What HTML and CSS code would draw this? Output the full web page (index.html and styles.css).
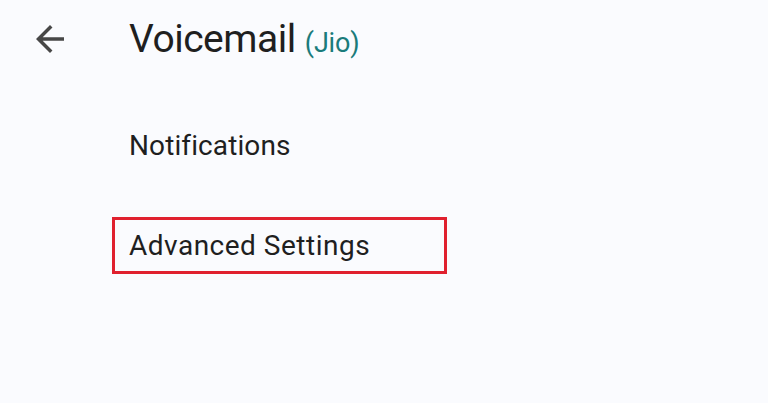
FILE: index.html
```html
<!DOCTYPE html>
<html>
<head>
<meta charset="utf-8">
<link rel="stylesheet" href="styles.css">
</head>
<body>
<div class="screen">
  <header class="topbar">
    <div class="back">
      <svg width="42" height="42" viewBox="0 0 24 24"><path d="M20 11H7.83l5.59-5.59L12 4l-8 8 8 8 1.41-1.41L7.83 13H20v-2z" fill="#474747"/></svg>
    </div>
    <h1 class="title">Voicemail <span class="carrier">(Jio)</span></h1>
  </header>
  <ul class="list">
    <li class="item notif">Notifications</li>
    <li class="item highlighted">Advanced Settings</li>
  </ul>
</div>
</body>
</html>
```
FILE: styles.css
```css
html, body {
  margin: 0;
  padding: 0;
  background: #fafbfe;
}
.screen {
  width: 768px;
  height: 403px;
  font-family: Roboto, "Open Sans", sans-serif;
  color: #1f1f1f;
}
.topbar {
  display: flex;
  align-items: center;
  height: 78px;
}
.back {
  width: 42px;
  height: 42px;
  margin-left: 29px;
  margin-right: 58px;
  display: flex;
}
.title {
  margin: 0;
  font-size: 39px;
  font-weight: 400;
  letter-spacing: -0.5px;
  line-height: 1;
}
.carrier {
  font-size: 27px;
  color: #1a7b7b;
  letter-spacing: -0.2px;
}
.list {
  list-style: none;
  margin: 0;
  padding: 39px 0 0 112px;
  display: flex;
  flex-direction: column;
  gap: 43px;
}
.item {
  box-sizing: border-box;
  font-size: 28px;
  letter-spacing: 0.5px;
  line-height: 57px;
  height: 57px;
  padding-left: 17px;
  width: 335px;
}
.notif {
  letter-spacing: 0.1px;
}
.highlighted {
  border: 3px solid #e0202e;
  padding-left: 14px;
  line-height: 51px;
}
```
